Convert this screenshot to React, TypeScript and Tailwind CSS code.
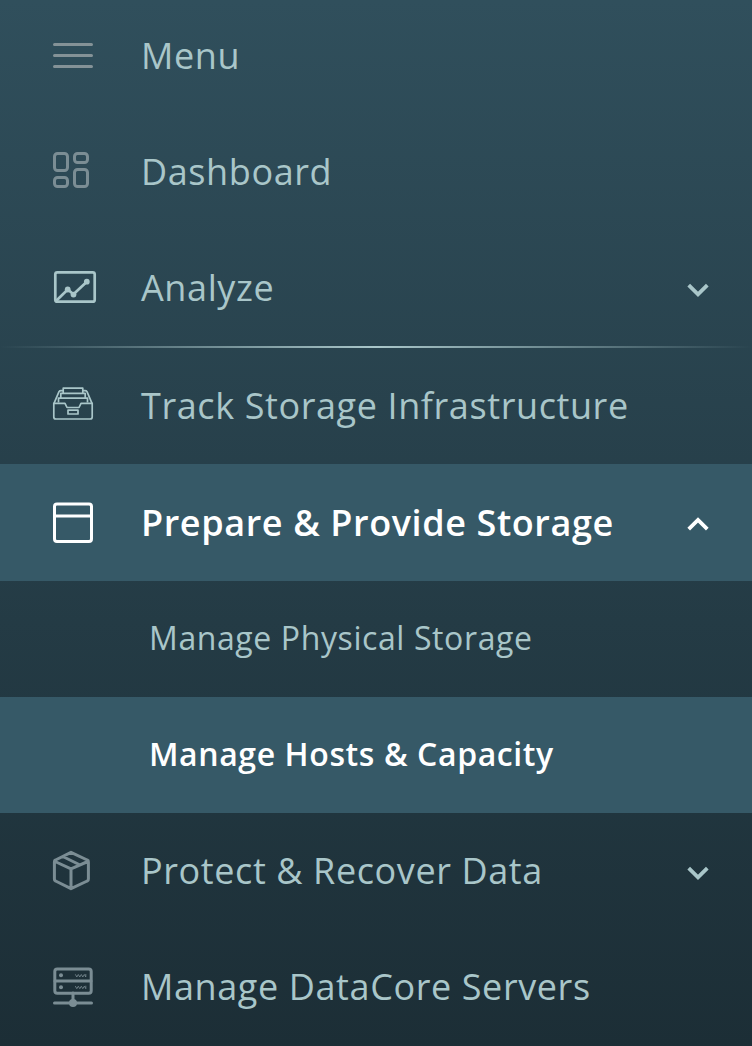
import type { ReactNode } from 'react';

const iconClass = 'ml-10 h-[60px] w-[64px] shrink-0 fill-none';

const MenuIcon = () => (
  <svg viewBox="0 0 64 60" className={`${iconClass} stroke-[#849297]`} strokeWidth="3" strokeLinecap="round">
    <path d="M14.5 18.4h37M14.5 29.5h37M14.5 40.5h37" />
  </svg>
);

const DashboardIcon = () => (
  <svg viewBox="0 0 64 60" className={`${iconClass} stroke-[#7b8d94]`} strokeWidth="3">
    <rect x="14.5" y="11.5" width="13" height="17" rx="3" />
    <rect x="34.5" y="11.5" width="13" height="9" rx="3" />
    <rect x="14.5" y="35.5" width="13" height="9" rx="3" />
    <rect x="34.5" y="27.5" width="13" height="17" rx="3" />
  </svg>
);

const AnalyzeIcon = () => (
  <svg viewBox="0 0 64 60" className={`${iconClass} stroke-[#a9c6c9]`} strokeWidth="2.7">
    <rect x="15.3" y="14.3" width="39.4" height="29.4" rx="2" />
    <path d="M16 43L27.7 31.5L33.5 36.3L46.8 23.7" />
    <g className="fill-[#a9c6c9] stroke-none">
      <circle cx="27.7" cy="31.5" r="2.9" />
      <circle cx="33.5" cy="36.6" r="2.9" />
      <circle cx="46.8" cy="23.7" r="2.9" />
    </g>
  </svg>
);

const TrackIcon = () => (
  <svg viewBox="0 0 64 60" className={`${iconClass} stroke-[#a9c6c9]`} strokeWidth="1.7" strokeLinejoin="round">
    <path d="M13.8 27.3H25l2 4.2h12l2-4.2h11.2V41a2 2 0 0 1-2 2H15.8a2 2 0 0 1-2-2z" />
    <path d="M14 27.3L19 15.6Q19.6 14.6 21 14.6H23M52 27.3L47 15.6Q46.4 14.6 45 14.6H43M23.2 16.5v-4.3h19.6v4.3M20.8 21.5v-4.2h24.4v4.2M18.5 26.5v-4.3h29v4.3" />
    <rect x="28" y="34.2" width="10" height="3.8" />
  </svg>
);

const PrepareIcon = () => (
  <svg viewBox="0 0 64 60" className={`${iconClass} stroke-white`} strokeWidth="3">
    <rect x="14.5" y="11" width="37" height="37.5" rx="2.5" />
    <path d="M14.5 23h37" />
  </svg>
);

const ProtectIcon = () => (
  <svg viewBox="0 0 64 60" className={`${iconClass} stroke-[#7b8d94]`} strokeWidth="3" strokeLinejoin="round">
    <path d="M31 11.3L47.2 19a2 2 0 0 1 1.2 2v17a2 2 0 0 1-1.2 2L31 47.7L15.6 40a2 2 0 0 1-1.2-2V21a2 2 0 0 1 1.2-2zM15 20.5l16 7.3l16.8-7.3M31 27.8v19.6M22.8 15.5l16.3 8" />
  </svg>
);

const ServersIcon = () => (
  <svg viewBox="0 0 64 60" className={`${iconClass} stroke-[#7b8d94]`} strokeWidth="3">
    <rect x="14.8" y="12" width="36.4" height="24.2" rx="2.5" />
    <path d="M15 24h36M33 36v9M14.5 46h37" strokeLinecap="round" />
    <g className="fill-[#7b8d94] stroke-none">
      <circle cx="21" cy="18.2" r="2" />
      <circle cx="21" cy="30.2" r="2" />
      <circle cx="33" cy="46" r="4" />
    </g>
    <path d="M35.3 17.3l1.5 2.7l1.5-2.5l1.5 2.5l1.5-2.5l1.5 2.5l1.5-2.5l1.5 2.5v-3M35.3 29l1.5 2.7l1.5-2.5l1.5 2.5l1.5-2.5l1.5 2.5l1.5-2.5l1.5 2.5v-3" strokeWidth="0.8" />
  </svg>
);

function Chevron({ up = false }: { up?: boolean }) {
  return (
    <svg
      viewBox="0 0 24 16"
      className={`mr-[42px] ml-auto h-4 w-6 shrink-0 fill-none ${up ? 'mt-[3px] stroke-white' : 'mt-1 stroke-[#a9c6c9]'}`}
      strokeWidth="3.8"
    >
      <path d={up ? 'M2.7 13.2L12 4L21.3 13.2' : 'M2.7 3.2L12 12.4L21.3 3.2'} />
    </svg>
  );
}

interface ItemProps {
  icon: ReactNode;
  label: string;
  active?: boolean;
  chevron?: 'up' | 'down';
}

function Item({ icon, label, active, chevron }: ItemProps) {
  return (
    <li
      className={`flex shrink-0 items-center ${active ? 'h-[117px] bg-[#365967] font-semibold text-white' : 'h-[116px]'}`}
    >
      {icon}
      <span className="ml-[37px] text-[36px] leading-[50px] tracking-[0.6px] whitespace-nowrap">{label}</span>
      {chevron && <Chevron up={chevron === 'up'} />}
    </li>
  );
}

function SubItem({ label, active }: { label: string; active?: boolean }) {
  return (
    <li
      className={`flex h-[116px] shrink-0 items-center pb-0.5 pl-[149px] text-[32px] leading-[44px] tracking-[0.6px] whitespace-nowrap ${active ? 'bg-[#365967] font-semibold text-white' : ''}`}
    >
      {label}
    </li>
  );
}

export default function App() {
  return (
    <nav className="h-[1046px] w-[752px] overflow-hidden bg-linear-to-b from-[#304f5c] to-[#1c2e36] font-['Open_Sans',sans-serif] text-[#a9c6c9]">
      <ul className="-mt-0.5 flex flex-col">
        <Item icon={<MenuIcon />} label="Menu" />
        <Item icon={<DashboardIcon />} label="Dashboard" />
        <Item icon={<AnalyzeIcon />} label="Analyze" chevron="down" />
        <li role="separator" className="h-0.5 shrink-0 bg-linear-to-r from-transparent via-[#a9c6c9] to-transparent" />
        <Item icon={<TrackIcon />} label="Track Storage Infrastructure" />
        <Item icon={<PrepareIcon />} label="Prepare & Provide Storage" active chevron="up" />
        <SubItem label="Manage Physical Storage" />
        <SubItem label="Manage Hosts & Capacity" active />
        <Item icon={<ProtectIcon />} label="Protect & Recover Data" chevron="down" />
        <Item icon={<ServersIcon />} label="Manage DataCore Servers" />
      </ul>
    </nav>
  );
}
